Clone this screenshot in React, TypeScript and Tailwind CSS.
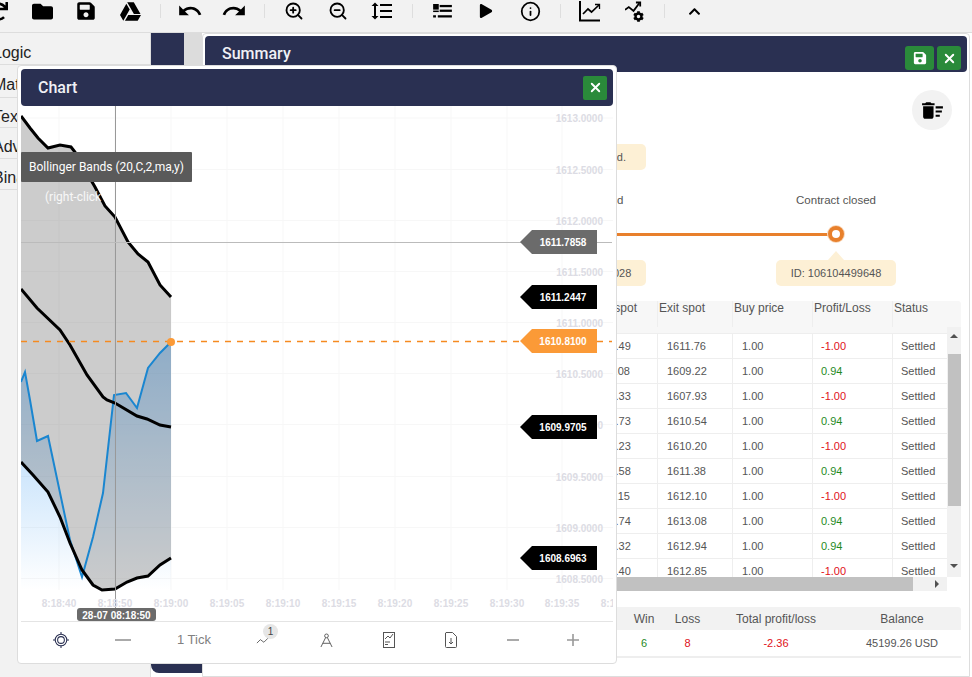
import { FaChevronUp, FaCog, FaFolder, FaGoogleDrive, FaPlay, FaRedo, FaSave } from "react-icons/fa";
import { MdDeleteSweep, MdFormatLineSpacing, MdRedo, MdUndo } from "react-icons/md";
import { Info, X, ZoomIn, ZoomOut } from "lucide-react";

const menuRows = [
  { label: "Logic", height: "h-[32px]" },
  { label: "Math", height: "h-[33px]" },
  { label: "Text", height: "h-[30px]" },
  { label: "Advanced", height: "h-[31px]" },
  { label: "Binary", height: "h-[31px]" },
];

const rows = [
  { entry: "1610.49", exit: "1611.76", pl: "-1.00" },
  { entry: "1611.08", exit: "1609.22", pl: "0.94" },
  { entry: "1609.33", exit: "1607.93", pl: "-1.00" },
  { entry: "1608.73", exit: "1610.54", pl: "0.94" },
  { entry: "1610.23", exit: "1610.20", pl: "-1.00" },
  { entry: "1610.58", exit: "1611.38", pl: "0.94" },
  { entry: "1611.15", exit: "1612.10", pl: "-1.00" },
  { entry: "1612.74", exit: "1613.08", pl: "0.94" },
  { entry: "1613.32", exit: "1612.94", pl: "0.94" },
  { entry: "1612.40", exit: "1612.85", pl: "-1.00" },
];

const upper = "21,116 30,128 38,138 48,148 60,145 71,147 75,152 84,168 95,187 105,206 115,217 128,242 138,254 148,262 160,285 171,297";
const middle = "21,289 37,308 60,330 70,345 87,375 103,397 107,400 115,403 137,416 147,419 160,425 171,427";
const lower = "21,462 33,475 48,492 60,517 70,543 82,570 93,585 102,590 115,589 127,582 137,578 148,576 160,565 171,558";
const lowerBack = lower.split(" ").reverse().join(" ");
const blue = "21,382 25,372 30,400 37,441 48,436 70,540 82,577 93,537 103,493 114,395 126,393 137,408 148,368 160,353 171,342";

const yTicks = [
  [118, "1613.0000"],
  [169.5, "1612.5000"],
  [220.5, "1612.0000"],
  [271.5, "1611.5000"],
  [322.5, "1611.0000"],
  [373.5, "1610.5000"],
  [424.5, "1610.0000"],
  [476.5, "1609.5000"],
  [527.5, "1609.0000"],
  [578.5, "1608.5000"],
] as const;

const xTicks = [
  [59, "8:18:40"],
  [115, "8:18:50"],
  [171, "8:19:00"],
  [227, "8:19:05"],
  [283, "8:19:10"],
  [339, "8:19:15"],
  [395, "8:19:20"],
  [451, "8:19:25"],
  [507, "8:19:30"],
  [562, "8:19:35"],
  [618, "8:19:40"],
] as const;

const priceTags = [
  [242, "#6b6b6b", "1611.7858"],
  [297, "#000000", "1611.2447"],
  [341, "#fb9a37", "1610.8100"],
  [427, "#000000", "1609.9705"],
  [558, "#000000", "1608.6963"],
] as const;

const Sep = () => <div className="mx-[7.5px] mt-[4px] h-[14px] w-px flex-none bg-[#dedede]" />;

const Btn = ({ children }: { children: React.ReactNode }) => (
  <div className="flex h-[22px] w-[44px] flex-none items-center justify-center text-black">{children}</div>
);

const Toolbar = () => (
  <div className="ml-[-24px] flex h-[33px] items-start border-b border-[#dddddd] bg-[#f2f2f2]">
    <Btn><FaRedo size={19} /></Btn>
    <Btn><FaFolder size={21} /></Btn>
    <Btn><FaSave size={20} /></Btn>
    <Btn><FaGoogleDrive size={21} /></Btn>
    <Sep />
    <Btn><MdUndo size={26} /></Btn>
    <Btn><MdRedo size={26} /></Btn>
    <Sep />
    <Btn><ZoomIn size={20} strokeWidth={2.2} /></Btn>
    <Btn><ZoomOut size={20} strokeWidth={2.2} /></Btn>
    <Btn><MdFormatLineSpacing size={24} /></Btn>
    <Sep />
    <Btn>
      <svg width="19" height="15" viewBox="0 0 20 16" fill="black">
        <rect x="0" y="0" width="6" height="6" />
        <rect x="7" y="1" width="13" height="2.4" />
        <rect x="7" y="6" width="13" height="2.4" />
        <rect x="0" y="7" width="6" height="1.6" />
        <rect x="0" y="12" width="3" height="2.4" />
        <rect x="5" y="12" width="15" height="2.4" />
      </svg>
    </Btn>
    <Btn><FaPlay size={14} /></Btn>
    <Btn><Info size={21} strokeWidth={2} /></Btn>
    <Sep />
    <Btn>
      <svg width="22" height="22" viewBox="0 0 22 22" fill="none" stroke="black" strokeWidth="2">
        <path d="M1 1V20.5H21" />
        <path d="M4 14L9 9L12.5 12L20 5" strokeWidth="1.7" />
        <path d="M16 4.5H20.5V9" strokeWidth="1.3" />
      </svg>
    </Btn>
    <Btn>
      <div className="relative h-[21px] w-[19px]">
        <svg width="19" height="14" viewBox="0 0 20 14" fill="none" stroke="black" strokeWidth="1.9">
          <path d="M0 9L4 6L9 10L15 2" />
          <path d="M11.5 1.2H16V5.5" />
        </svg>
        <FaCog size={11} className="absolute bottom-0 right-0" />
      </div>
    </Btn>
    <Sep />
    <Btn><FaChevronUp size={13} /></Btn>
  </div>
);

const Flyout = () => (
  <div className="w-[151px] flex-none overflow-hidden border-r border-[#dddddd] bg-[#f2f2f2]">
    {menuRows.map((row) => (
      <div
        key={row.label}
        className={`${row.height} flex items-center border-b border-[#dddddd] pt-[8px] text-[16px] leading-none text-[#222222]`}
      >
        <span className="ml-[-7px]">{row.label}</span>
      </div>
    ))}
  </div>
);

const Workspace = () => (
  <div className="h-[640px] w-[51px] flex-none rounded-bl-[8px] bg-[#2a3052]">
    <div className="ml-auto h-[32px] w-[18px] bg-[#dcdcdc]" />
  </div>
);

const Pill = ({ children }: { children: React.ReactNode }) => (
  <div className="flex h-[26px] items-center justify-center rounded-[5px] bg-[#fdf0d5] px-[15px] text-[11px] text-[#555555]">
    {children}
  </div>
);

const SummaryPanel = () => (
  <div className="flex h-full w-[768px] flex-none flex-col rounded-t-[4px] border border-[#dddddd] bg-white pl-[2px] pr-[2px] pt-[2px]">
    <div className="flex h-[36px] flex-none items-center justify-between rounded-[4px] bg-[#2a3052] pl-[17px] pr-[6px]">
      <span className="mt-[-1px] font-['Roboto',sans-serif] text-[16px] font-medium text-[#f0f0f5]">Summary</span>
      <div className="mt-[8px] flex gap-[3px]">
        <div className="flex h-[24px] w-[29px] items-center justify-center rounded-[3px] bg-[#2a8a3a] text-white"><FaSave size={14} /></div>
        <div className="flex h-[24px] w-[24px] items-center justify-center rounded-[3px] bg-[#2a8a3a] text-white"><X size={15} strokeWidth={3} /></div>
      </div>
    </div>

    <div className="mt-[18px] flex justify-end pr-[15px]">
      <div className="flex h-[40px] w-[40px] items-center justify-center rounded-full bg-[#f2f2f2] text-black">
        <MdDeleteSweep size={25} />
      </div>
    </div>

    <div className="mt-[14px] flex justify-end pr-[321px]">
      <div className="flex h-[26px] items-center rounded-[5px] bg-[#fdf0d5] px-[20px] text-[11px] text-[#555555]">
        The bot has been stopped.
      </div>
    </div>

    <div className="ml-[6px] mt-[22px] grid w-[750px] grid-cols-3 text-center text-[11.5px] leading-[16px] text-[#555555]">
      <span>Bot started</span>
      <span className="pr-[4px]">Buy succeeded</span>
      <span>Contract closed</span>
    </div>

    <div className="mt-[18px] flex h-[16px] items-center pl-[131px]">
      <div className="h-[3px] w-[492px] bg-[#e8802c]" />
      <div className="h-[16px] w-[16px] rounded-full border-[4px] border-[#e8802c] bg-white shadow-[0_0_0_1px_#f9d9bd]" />
    </div>

    <div className="ml-[6px] mt-[18px] grid w-[750px] grid-cols-3 justify-items-center">
      <Pill>ID: 106104499101</Pill>
      <Pill>ID: 106104499028</Pill>
      <div className="relative">
        <div className="absolute left-1/2 top-[-9px] h-0 w-0 -translate-x-1/2 border-x-[8px] border-b-[9px] border-x-transparent border-b-[#fdf0d5]" />
        <Pill>ID: 106104499648</Pill>
      </div>
    </div>

    <div className="ml-[6px] mt-[15px] w-[750px] text-[11px] text-[#555555]">
      <div className="flex h-[26px] rounded-t-[3px] bg-[#f7f7f7] text-[12px] text-[#555555]">
        <div className="w-[371px] flex-none" />
        <div className="w-[75px] flex-none pl-[1px] leading-[15px]">Entry spot</div>
        <div className="w-[75px] flex-none border-l border-[#eeeeee] pl-[1px] leading-[15px]">Exit spot</div>
        <div className="w-[80px] flex-none border-l border-[#eeeeee] pl-[1px] leading-[15px]">Buy price</div>
        <div className="w-[80px] flex-none border-l border-[#eeeeee] pl-[1px] leading-[15px]">Profit/Loss</div>
        <div className="w-[69px] flex-none border-l border-[#eeeeee] pl-[1px] leading-[15px]">Status</div>
      </div>
      <div className="flex h-[250px]">
        <div className="w-[736px] flex-none">
          <div className="h-[6px] bg-[#f7f7f7]" />
          <div className="h-[244px] overflow-hidden">
            {rows.map((row) => (
              <div key={row.exit} className="flex h-[25px] items-center border-t border-[#eeeeee]">
                <div className="w-[371px] flex-none" />
                <div className="h-full w-[75px] flex-none pl-[9px] leading-[24px]">{row.entry}</div>
                <div className="h-full w-[75px] flex-none border-l border-[#eeeeee] pl-[9px] leading-[24px]">{row.exit}</div>
                <div className="h-full w-[80px] flex-none border-l border-[#eeeeee] pl-[9px] leading-[24px]">1.00</div>
                <div
                  className={`h-full w-[80px] flex-none border-l border-[#eeeeee] pl-[8px] leading-[24px] ${
                    row.pl === "0.94" ? "text-[#1f8a1f]" : "text-[#e01020]"
                  }`}
                >
                  {row.pl}
                </div>
                <div className="h-full w-[55px] flex-none border-l border-[#eeeeee] pl-[8px] leading-[24px]">Settled</div>
              </div>
            ))}
          </div>
        </div>
        <div className="flex h-[250px] w-[14px] flex-none flex-col items-center bg-[#f1f1f1]">
          <div className="mt-[7px] h-0 w-0 border-x-[4px] border-b-[4px] border-x-transparent border-b-[#505050]" />
          <div className="mt-[16px] h-[152px] w-[13px] bg-[#c1c1c1]" />
          <div className="mt-[58px] h-0 w-0 border-x-[4px] border-t-[4px] border-x-transparent border-t-[#505050]" />
        </div>
      </div>
      <div className="flex h-[14px] w-[736px] items-center bg-[#f1f1f1]">
        <div className="h-full w-[702px] flex-none bg-[#c1c1c1]" />
        <div className="ml-[22px] h-0 w-0 border-y-[4px] border-l-[4px] border-y-transparent border-l-[#505050]" />
      </div>

      <div className="mt-[16px]">
        <div className="flex h-[23px] items-center rounded-t-[3px] bg-[#f2f2f2] text-center text-[12px] text-[#555555]">
          <div className="w-[411px] flex-none" />
          <div className="w-[44px] flex-none">Win</div>
          <div className="w-[43px] flex-none">Loss</div>
          <div className="w-[134px] flex-none">Total profit/loss</div>
          <div className="w-[118px] flex-none">Balance</div>
        </div>
        <div className="flex h-[28px] items-center border-b-[2px] border-[#eeeeee] text-center">
          <div className="w-[411px] flex-none" />
          <div className="w-[44px] flex-none text-[#1f8a1f]">6</div>
          <div className="w-[43px] flex-none text-[#e01020]">8</div>
          <div className="w-[134px] flex-none text-[#e01020]">-2.36</div>
          <div className="w-[118px] flex-none">45199.26 USD</div>
        </div>
      </div>
    </div>
  </div>
);

const ChartDrawing = () => (
  <svg width="592" height="515" viewBox="21 106 592 515" className="block flex-none">
    <defs>
      <linearGradient id="area" x1="0" y1="342" x2="0" y2="590" gradientUnits="userSpaceOnUse">
        <stop offset="0" stopColor="#1e8cf0" stopOpacity="0.45" />
        <stop offset="1" stopColor="#1e8cf0" stopOpacity="0" />
      </linearGradient>
    </defs>

    {yTicks.map(([y]) => (
      <line key={y} x1="21" x2="613" y1={y} y2={y} stroke="#f7f7f7" />
    ))}
    {xTicks.map(([x]) => (
      <line key={x} x1={x} x2={x} y1="106" y2="590" stroke="#f7f7f7" />
    ))}

    <polygon points={`21,382 ${blue} 171,590 21,590`} fill="url(#area)" />
    <polygon points={`${upper} ${lowerBack}`} fill="#7f7f7f" fillOpacity="0.4" />
    <polyline points={blue} fill="none" stroke="#1a86d0" strokeWidth="2" />
    <polyline points={upper} fill="none" stroke="#000" strokeWidth="3" />
    <polyline points={middle} fill="none" stroke="#000" strokeWidth="3" />
    <polyline points={lower} fill="none" stroke="#000" strokeWidth="3" />

    <line x1="115.5" x2="115.5" y1="106" y2="608" stroke="#999999" />
    <line x1="21" x2="612" y1="242.5" y2="242.5" stroke="#bbbbbb" />
    <line x1="21" x2="612" y1="341.5" y2="341.5" stroke="#f58a20" strokeWidth="1.4" strokeDasharray="6 6" />
    <circle cx="171" cy="342" r="4" fill="#fb9a37" />

    <g fontFamily="'Liberation Sans', sans-serif" fontSize="10" fontWeight="700">
      {yTicks.map(([y, label]) => (
        <text key={label} x="603" y={y + 4} textAnchor="end" fill="#dcdce4">{label}</text>
      ))}
      {xTicks.map(([x, label]) => (
        <text key={label} x={x} y="607" textAnchor="middle" fill="#dcdce4">{label}</text>
      ))}
      {priceTags.map(([y, color, label]) => (
        <g key={label}>
          <polygon points={`520,${y} 532,${y - 12} 597,${y - 12} 597,${y + 12} 532,${y + 12}`} fill={color} />
          <text x="563" y={y + 4} textAnchor="middle" fill="#ffffff">{label}</text>
        </g>
      ))}
      <rect x="77" y="608" width="79" height="13" rx="3" fill="#6b6b6b" />
      <text x="116.5" y="618.5" textAnchor="middle" fill="#ffffff">28-07 08:18:50</text>
    </g>
  </svg>
);

const ChartFooter = () => (
  <div className="relative flex h-[37px] flex-none items-center border-t border-[#e4e4e4] text-[#666666]">
    <div className="flex w-[80px] justify-center">
      <svg width="16" height="16" viewBox="0 0 18 18" fill="none" stroke="#2a3052" strokeWidth="1.2">
        <circle cx="9" cy="9" r="6.5" />
        <circle cx="9" cy="9" r="3.8" />
        <path d="M9 0V2.5M9 15.5V18M0 9H2.5M15.5 9H18" />
      </svg>
    </div>
    <div className="flex w-[44px] justify-center">
      <div className="h-[2px] w-[16px] bg-[#aaaaaa]" />
    </div>
    <div className="flex w-[98px] justify-center text-[13px] text-[#808080]">1 Tick</div>
    <div className="relative flex w-[40px] justify-center">
      <svg width="14" height="9" viewBox="0 0 16 10" fill="none" stroke="#555555" strokeWidth="1">
        <path d="M1 8L5 4L9 7L14 2" />
      </svg>
      <span className="absolute left-[20px] top-[-12px] flex h-[15px] w-[15px] items-center justify-center rounded-full bg-[#e6e6e6] text-[10px] text-[#444444]">1</span>
    </div>
    <div className="flex w-[86px] justify-center">
      <svg width="13" height="15" viewBox="0 0 14 16" fill="none" stroke="#555555" strokeWidth="1">
        <circle cx="7" cy="3" r="2" />
        <path d="M6 5L1 15M8 5L13 15M3 11H11" />
      </svg>
    </div>
    <div className="flex w-[40px] justify-center">
      <svg width="12" height="16" viewBox="0 0 12 16" fill="none" stroke="#555555" strokeWidth="1">
        <rect x="0.5" y="0.5" width="11" height="15" />
        <path d="M2 7L5 4L7 6L10 2M2 10H7M2 12.5H5" />
      </svg>
    </div>
    <div className="flex w-[84px] justify-center">
      <svg width="12" height="16" viewBox="0 0 12 16" fill="none" stroke="#555555" strokeWidth="1">
        <path d="M1 0.5H7.5L11.5 4.5V14.5A1 1 0 0 1 10.5 15.5H1.5A1 1 0 0 1 0.5 14.5V1Z" />
        <path d="M6 6V12M4 10L6 12L8 10" />
      </svg>
    </div>
    <div className="flex w-[40px] justify-center">
      <div className="h-[2px] w-[12px] bg-[#aaaaaa]" />
    </div>
    <div className="flex w-[80px] justify-center">
      <svg width="12" height="12" viewBox="0 0 12 12" stroke="#999999" strokeWidth="1.6">
        <path d="M6 0V12M0 6H12" />
      </svg>
    </div>
  </div>
);

const ChartWindow = () => (
  <div className="absolute left-[17px] top-[65px] flex h-[599px] w-[600px] flex-col overflow-hidden rounded-[4px] border border-[#dddddd] bg-white pl-[3px] pr-[3px] pt-[3px]">
    <div className="flex h-[37px] flex-none items-center justify-between rounded-[4px] bg-[#2a3052] pl-[17px] pr-[6px]">
      <span className="font-['Roboto',sans-serif] text-[16px] font-medium text-[#f0f0f5]">Chart</span>
      <div className="flex h-[24px] w-[24px] items-center justify-center rounded-[2px] bg-[#2a8a3a] text-white">
        <X size={15} strokeWidth={3} />
      </div>
    </div>
    <ChartDrawing />
    <ChartFooter />
    <div className="absolute left-[3px] top-[86px] flex h-[30px] w-[171px] items-center justify-center rounded-[1px] bg-[#5a5a5a] font-['Roboto',sans-serif] text-[12px] text-white">
      Bollinger Bands (20,C,2,ma,y)
    </div>
    <div className="absolute left-[27px] top-[122px] font-['Roboto',sans-serif] text-[12px] text-white/85">(right-click</div>
  </div>
);

const App = () => (
  <div className="relative h-[677px] w-[972px] overflow-hidden bg-white font-['Liberation_Sans',Arial,sans-serif]">
    <Toolbar />
    <div className="flex h-[644px] items-start">
      <div className="flex h-full">
        <Flyout />
      </div>
      <Workspace />
      <SummaryPanel />
    </div>
    <ChartWindow />
  </div>
);

export default App;
